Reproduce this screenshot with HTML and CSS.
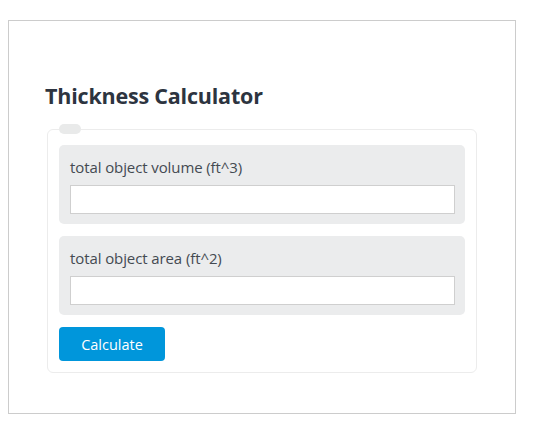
FILE: index.html
```html
<!DOCTYPE html>
<html lang="en">

<head>
    <meta charset="UTF-8">
    <meta name="viewport" content="width=device-width, initial-scale=1.0">
    <title>Thickness Calculator</title>
    <link rel="stylesheet" href="styles.css">
</head>

<body>
    <div class="calc-box">
        <h2 class="calc-title">Thickness Calculator</h2>
        <fieldset class="calc-form">
            <legend></legend>
            <div class="field">
                <label for="volume">total object volume (ft^3)</label>
                <input type="text" id="volume">
            </div>
            <div class="field">
                <label for="area">total object area (ft^2)</label>
                <input type="text" id="area">
            </div>
            <button type="button" class="calc-btn">Calculate</button>
        </fieldset>
    </div>
</body>

</html>
```

FILE: styles.css
```css
* {
    box-sizing: border-box;
}

body {
    margin: 0;
    padding: 20px 24px 0 8px;
    font-family: 'Open Sans', 'Noto Sans', sans-serif;
    background-color: #fff;
}

.calc-box {
    width: 508px;
    height: 394px;
    border: 1px solid #cccccc;
    padding: 60px 36px 0 36px;
}

.calc-title {
    margin: 0 0 14px 0;
    font-size: 21.5px;
    font-weight: bold;
    line-height: 29px;
    color: #2d3440;
    letter-spacing: -0.2px;
}

.calc-form {
    margin: 0 0 0 2px;
    width: 430px;
    border: 1px solid #ececec;
    border-radius: 6px;
    padding: 11px 11px 11px 11px;
}

.calc-form legend {
    width: 22px;
    height: 10px;
    padding: 0;
    margin-left: 0;
    background-color: #e9eaea;
    border-radius: 5px;
}

.field {
    background-color: #ebeced;
    border-radius: 5px;
    padding: 12px 10px 10px 11px;
    margin-bottom: 12px;
}

.field label {
    display: block;
    font-size: 15px;
    line-height: 20px;
    color: #444a52;
    margin-bottom: 8px;
    letter-spacing: -0.1px;
}

.field input {
    display: block;
    width: 100%;
    height: 29px;
    border: 1px solid #cfcfcf;
    background-color: #fff;
    margin: 0;
}

.calc-btn {
    display: block;
    background-color: #0096db;
    color: #fff;
    border: none;
    border-radius: 4px;
    width: 106px;
    height: 34px;
    font-family: 'Open Sans', 'Noto Sans', sans-serif;
    font-size: 14.5px;
    cursor: pointer;
}
```
